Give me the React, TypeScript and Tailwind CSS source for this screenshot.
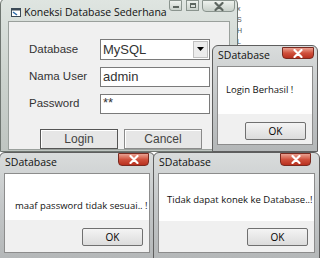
import React from 'react';

const font = { fontFamily: '"Liberation Sans", Arial, sans-serif' };
const uiFont = { fontFamily: '"Open Sans", "Noto Sans", sans-serif' };

const CloseX: React.FC<{ red?: boolean; className?: string }> = ({ red = true, className = '' }) => (
  <div
    className={`absolute flex items-center justify-center rounded-b-[4px] border ${
      red
        ? 'border-[#7a2a20] bg-gradient-to-b from-[#e9a091] via-[#d0503c] to-[#b8301f]'
        : 'border-[#8a948e] bg-gradient-to-b from-[#eef2ee] to-[#c9d1cb]'
    } ${className}`}
  >
    <svg width="10" height="9" viewBox="0 0 10 9">
      <path
        d="M1.5 1 L8.5 8 M8.5 1 L1.5 8"
        stroke={red ? '#ffffff' : '#5d6660'}
        strokeWidth="2.2"
        strokeLinecap="round"
      />
    </svg>
  </div>
);

interface DialogProps {
  className: string;
  message: string;
  closeClass: string;
  whiteH: string;
  textPad: string;
  okPad: string;
}

const MessageBox: React.FC<DialogProps> = ({ className, message, closeClass, whiteH, textPad, okPad }) => (
  <div
    className={`absolute rounded-t-[6px] border border-[#5e5e5e] bg-gradient-to-b from-[#d9dcdc] via-[#c4c7c8] to-[#b4b7b8] px-[4px] pb-[6px] flex flex-col ${className}`}
  >
    <div className="h-[20px] flex items-end pb-[2px] pl-[1px] text-[10.5px] text-[#111]" style={uiFont}>
      SDatabase
    </div>
    <CloseX className={closeClass} />
    <div className="flex-1 flex flex-col border border-[#8c8c8c]">
      <div className={`bg-white ${whiteH} flex items-start ${textPad} text-[9.5px] text-[#111]`} style={uiFont}>
        {message}
      </div>
      <div className={`flex-1 bg-[#f0f0f0] flex justify-end ${okPad}`}>
        <button
          className="w-[61px] h-[18px] border border-[#707070] rounded-[2px] bg-gradient-to-b from-[#f4f4f4] to-[#dcdcdc] text-[10px] text-black"
          style={uiFont}
        >
          OK
        </button>
      </div>
    </div>
  </div>
);

export default function App() {
  return (
    <div className="relative w-[320px] h-[258px] overflow-hidden bg-white">
      {/* background letters */}
      <div className="absolute left-[237px] top-[4px] flex flex-col gap-[2px] text-[7px] leading-[9px] text-[#555]" style={font}>
        <span>x</span>
        <span>S</span>
        <span>H</span>
        <span>L</span>
      </div>

      {/* main window */}
      <div className="absolute left-0 top-[-2px] w-[238px] h-[154px] rounded-t-[6px] border border-[#6f7671] bg-gradient-to-b from-[#dfe5e1] via-[#ccd3ce] to-[#bfc5c1] px-[7px] pb-[4px] flex flex-col">
        <div className="h-[22px] flex items-center gap-[3px] pl-[3px] pt-[6px] text-[10.5px] text-[#111]" style={uiFont}>
          <svg width="10" height="9" viewBox="0 0 10 9">
            <rect x="0.5" y="0.5" width="9" height="8" fill="#ffffff" stroke="#3b4a56" />
            <rect x="0.5" y="0.5" width="9" height="2" fill="#3b4a56" />
            <path d="M2 4 L6 7" stroke="#2b6aa8" strokeWidth="1.5" />
          </svg>
          <span>Koneksi Database Sederhana</span>
        </div>
        <div className="absolute left-[168px] top-[1px] w-[13px] h-[11px] rounded-bl-[3px] border border-[#8a948e] bg-gradient-to-b from-[#eef2ee] to-[#c9d1cb] flex items-end justify-center pb-[2px]">
          <div className="w-[6px] h-[2px] bg-[#5d6660]" />
        </div>
        <div className="absolute left-[185px] top-[1px] w-[13px] h-[11px] border border-[#8a948e] bg-gradient-to-b from-[#eef2ee] to-[#c9d1cb] flex items-center justify-center">
          <div className="w-[6px] h-[5px] border border-[#5d6660] border-t-2" />
        </div>
        <CloseX red={false} className="left-[201px] top-[1px] w-[33px] h-[12px]" />

        <div className="flex-1 bg-[#f0f0f0] border border-[#9aa09c] pt-[17px] pl-[20px]" style={font}>
          <div className="grid grid-cols-[71px_110px] gap-y-[7px] items-center text-[#333]">
            <span className="text-[11.5px]">Database</span>
            <div className="h-[21px] bg-white border border-[#7a7a7a] flex items-center justify-between pl-[2px] text-[13px]">
              <span>MySQL</span>
              <div className="w-[15px] h-[17px] mr-[1px] bg-[#ececec] border border-[#c0c0c0] flex items-center justify-center">
                <svg width="7" height="4" viewBox="0 0 7 4">
                  <path d="M0 0 H7 L3.5 4 Z" fill="#000" />
                </svg>
              </div>
            </div>
            <span className="text-[11.5px]">Nama User</span>
            <div className="h-[20px] bg-white border border-[#7a7a7a] flex items-center pl-[2px] text-[13px]">admin</div>
            <span className="text-[11.5px]">Password</span>
            <div className="h-[20px] bg-white border border-[#7a7a7a] flex items-start pl-[2px] leading-[16px] text-[13px]">**</div>
          </div>
          <div className="flex gap-[6px] mt-[15px] ml-[11px] text-[12px] text-[#444]">
            <button className="w-[78px] h-[20px] border border-[#555] bg-[#e6e6e6] shadow-[inset_1px_1px_0_#fff]">Login</button>
            <button className="w-[78px] h-[20px] border border-[#8a8a8a] bg-[#e6e6e6] shadow-[inset_1px_1px_0_#fff]">Cancel</button>
          </div>
        </div>
      </div>

      <MessageBox
        className="left-[212px] top-[45px] w-[106px] h-[107px]"
        message="Login Berhasil !"
        closeClass="left-[69px] top-[1px] w-[32px] h-[12px]"
        whiteH="h-[47px]"
        textPad="pt-[16px] pl-[8px]"
        okPad="pt-[8px] pr-[6px]"
      />
      <MessageBox
        className="left-[-1px] top-[152px] w-[156px] h-[108px]"
        message="maaf password tidak sesuai.. !"
        closeClass="left-[118px] top-[0px] w-[31px] h-[13px]"
        whiteH="h-[46px]"
        textPad="pt-[25px] pl-[10px]"
        okPad="pt-[8px] pr-[6px]"
      />
      <MessageBox
        className="left-[153px] top-[152px] w-[167px] h-[108px]"
        message="Tidak dapat konek ke Database..!"
        closeClass="left-[126px] top-[0px] w-[31px] h-[13px]"
        whiteH="h-[47px]"
        textPad="pt-[19px] pl-[8px]"
        okPad="pt-[7px] pr-[6px]"
      />
    </div>
  );
}
